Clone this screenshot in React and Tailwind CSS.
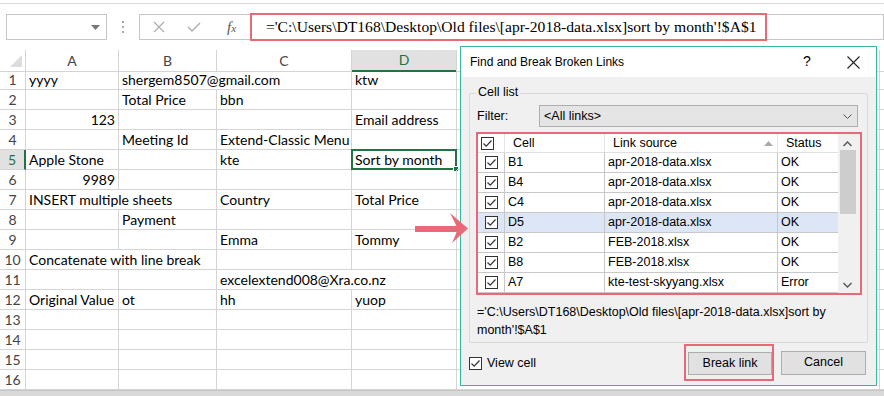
import React from "react";

const PINK = "#e86a78";

const rows = [
  [{ t: "yyyy" }, { t: "shergem8507@gmail.com", span: 2 }, { t: "ktw" }, {}],
  [{}, { t: "Total Price" }, { t: "bbn" }, {}, {}],
  [{ t: "123", right: true }, {}, {}, { t: "Email address" }, {}],
  [{}, { t: "Meeting Id" }, { t: "Extend-Classic Menu" }, {}, {}],
  [{ t: "Apple Stone" }, {}, { t: "kte" }, { t: "Sort by month", sel: true }, {}],
  [{ t: "9989", right: true }, {}, {}, {}, {}],
  [{ t: "INSERT multiple sheets", span: 2 }, { t: "Country" }, { t: "Total Price" }, {}],
  [{}, { t: "Payment" }, {}, {}, {}],
  [{}, {}, { t: "Emma" }, { t: "Tommy" }, {}],
  [{ t: "Concatenate with line break", span: 2 }, {}, {}, {}],
  [{}, {}, { t: "excelextend008@Xra.co.nz", span: 2 }, {}],
  [{ t: "Original Value" }, { t: "ot" }, { t: "hh" }, { t: "yuop" }, {}],
  [{}, {}, {}, {}, {}],
  [{}, {}, {}, {}, {}],
  [{}, {}, {}, {}, {}],
  [{}, {}, {}, {}, {}],
];

const links = [
  ["B1", "apr-2018-data.xlsx", "OK"],
  ["B4", "apr-2018-data.xlsx", "OK"],
  ["C4", "apr-2018-data.xlsx", "OK"],
  ["D5", "apr-2018-data.xlsx", "OK"],
  ["B2", "FEB-2018.xlsx", "OK"],
  ["B8", "FEB-2018.xlsx", "OK"],
  ["A7", "kte-test-skyyang.xlsx", "Error"],
];

function Check() {
  return (
    <svg width="13" height="13" viewBox="0 0 13 13" className="block">
      <rect x="0.5" y="0.5" width="12" height="12" fill="white" stroke="#333" />
      <path d="M2.5 6.5 L5.2 9.2 L10.5 3.5" fill="none" stroke="#333" strokeWidth="1.2" />
    </svg>
  );
}

function Sheet() {
  return (
    <div className="flex flex-col" style={{ fontFamily: "Lato, 'Liberation Sans', sans-serif" }}>
      <div className="grid grid-cols-[26px_93px_98px_135px_105px_423px_1fr] h-[20px] text-[14px] text-[#444]">
        <div className="border-r border-b border-[#d4d4d4] relative">
          <svg width="26" height="20" className="absolute inset-0">
            <path d="M22 5 L22 17 L10 17 Z" fill="#dcdcdc" />
          </svg>
        </div>
        {["A", "B", "C"].map((c) => (
          <div key={c} className="border-r border-b border-[#d4d4d4] flex items-center justify-center leading-none">{c}</div>
        ))}
        <div className="border-r border-[#d4d4d4] border-b-2 border-b-[#217346] bg-[#e1e1e1] flex items-center justify-center leading-none text-[#217346]">D</div>
        <div className="border-r border-b border-[#d4d4d4] flex items-center justify-center">E</div>
        <div className="border-b border-[#d4d4d4]"></div>
      </div>
      {rows.map((r, i) => (
        <div key={i} className="grid grid-cols-[26px_93px_98px_135px_105px_423px_1fr] h-[20px] text-[14px] text-black">
          <div
            className={
              i === 4
                ? "border-b border-[#d4d4d4] border-r-2 border-r-[#217346] bg-[#e1e1e1] flex items-center justify-center text-[#217346] leading-none"
                : "border-r border-b border-[#d4d4d4] flex items-center justify-center text-[#444] leading-none"
            }
          >
            {i + 1}
          </div>
          {r.map((c, j) => (
            <div
              key={j}
              className={
                (c.span ? "col-span-2 " : "") +
                "relative border-r border-b border-[#d4d4d4] flex items-center whitespace-nowrap overflow-visible leading-none px-[3px] " +
                (c.right ? "justify-end" : "")
              }
            >
              {c.t}
              {c.sel && (
                <div className="absolute -left-[1px] -top-[1px] -right-[1px] -bottom-[1px] border-2 border-[#217346]">
                  <div className="absolute -right-[4px] -bottom-[4px] w-[6px] h-[6px] bg-[#217346] border border-white"></div>
                </div>
              )}
            </div>
          ))}
          <div className="border-b border-[#d4d4d4]"></div>
        </div>
      ))}
      <div className="h-[6px] bg-[#d9d9d9] border-t border-[#c6c6c6]"></div>
    </div>
  );
}

function Toolbar() {
  return (
    <div className="h-[50px] pt-[3px] bg-white">
      <div className="border-t border-[#dadada] h-full flex items-start pt-[10px]">
        <div className="ml-[6px] w-[101px] h-[26px] border border-[#c6c6c6] relative bg-white">
          <svg width="9" height="5" className="absolute right-[6px] top-[10px]">
            <path d="M0 0 L9 0 L4.5 5 Z" fill="#777" />
          </svg>
        </div>
        <div className="w-[32px] h-[26px] flex flex-col items-center justify-center gap-[3px]">
          <div className="w-[2px] h-[2px] bg-[#aaa]"></div>
          <div className="w-[2px] h-[2px] bg-[#aaa]"></div>
          <div className="w-[2px] h-[2px] bg-[#aaa]"></div>
        </div>
        <div className="w-[111px] h-[26px] border border-[#c6c6c6] border-r-0 flex items-center bg-white">
          <svg width="12" height="12" className="ml-[13px]">
            <path d="M1 1 L11 11 M11 1 L1 11" stroke="#b0b0b0" strokeWidth="1.3" />
          </svg>
          <svg width="14" height="12" className="ml-[22px]">
            <path d="M1 6 L5 10 L13 2" fill="none" stroke="#b0b0b0" strokeWidth="1.5" />
          </svg>
          <span
            className="ml-[26px] italic text-[15px] text-[#555] leading-none"
            style={{ fontFamily: "'Liberation Serif', serif" }}
          >
            f<span className="text-[11px]">x</span>
          </span>
        </div>
        <div
          className="-mt-[1px] w-[517px] h-[28px] border-2 flex items-center pl-[14px] text-[15.6px] text-black whitespace-nowrap"
          style={{ borderColor: PINK, fontFamily: "'Liberation Serif', serif" }}
        >
          ='C:\Users\DT168\Desktop\Old files\[apr-2018-data.xlsx]sort by month'!$A$1
        </div>
        <div className="flex-1 h-[26px] border border-l-0 border-[#c6c6c6]"></div>
      </div>
    </div>
  );
}

function Dialog() {
  return (
    <div
      className="absolute left-[460px] top-[46px] w-[417px] h-[340px] border border-[#36b6a0] bg-[#f0f0f0] text-[12px] text-black flex flex-col"
      style={{ fontFamily: "'Liberation Sans', Arial, sans-serif" }}
    >
      <div className="h-[30px] bg-white flex items-center pl-[9px] relative shrink-0">
        <span>Find and Break Broken Links</span>
        <span className="absolute left-[342px] top-[7px] text-[14px] leading-none">?</span>
        <svg width="13" height="13" className="absolute left-[386px] top-[9px]">
          <path d="M0.5 0.5 L12.5 12.5 M12.5 0.5 L0.5 12.5" stroke="#222" strokeWidth="1.1" />
        </svg>
      </div>
      <div className="mt-[16px] mx-[8px] h-[250px] border border-[#d9d9d9] rounded-[2px] relative flex flex-col">
        <span className="absolute -top-[8px] left-[6px] px-[2px] bg-[#f0f0f0] leading-none text-[12.5px]">Cell list</span>
        <div className="mt-[11px] flex items-center pl-[7px] pr-[9px] h-[22px]">
          <span className="w-[62px] text-[12.5px]">Filter:</span>
          <div className="flex-1 h-[22px] bg-[#e5e5e5] border border-[#adadad] flex items-center pl-[4px] relative text-[12.5px]">
            &lt;All links&gt;
            <svg width="9" height="6" className="absolute right-[5px] top-[8px]">
              <path d="M0.5 0.5 L4.5 4.5 L8.5 0.5" fill="none" stroke="#555" strokeWidth="1" />
            </svg>
          </div>
        </div>
        <div className="mt-[5px] ml-[6px] mr-[5px] border-2 h-[163px] flex" style={{ borderColor: PINK }}>
          <div className="w-[360px] bg-white flex flex-col">
            <div className="h-[19px] flex text-[12.5px] border-b border-[#e0e0e0]">
              <div className="w-[27px] border-r border-[#e5e5e5] flex items-center pl-[3px]">
                <Check />
              </div>
              <div className="w-[100px] border-r border-[#e5e5e5] flex items-center pl-[8px]">Cell</div>
              <div className="w-[173px] border-r border-[#e5e5e5] flex items-center pl-[8px] relative">
                Link source
                <svg width="9" height="5" className="absolute right-[4px] top-[7px]">
                  <path d="M0 5 L4.5 0 L9 5 Z" fill="#aaa" />
                </svg>
              </div>
              <div className="w-[60px] flex items-center pl-[8px]">Status</div>
            </div>
            {links.map((l, i) => (
              <div
                key={i}
                className={"h-[20px] flex text-[12.5px] border-b border-[#c8c8c8] " + (i === 3 ? "bg-[#dce6f7]" : "")}
              >
                <div className="w-[27px] border-r border-[#c8c8c8] flex items-center pl-[7px]">
                  <Check />
                </div>
                <div className="w-[100px] border-r border-[#c8c8c8] flex items-center pl-[3px]">{l[0]}</div>
                <div className="w-[173px] border-r border-[#c8c8c8] flex items-center pl-[3px]">{l[1]}</div>
                <div className="w-[60px] flex items-center pl-[3px]">{l[2]}</div>
              </div>
            ))}
          </div>
          <div className="flex-1 bg-[#f0f0f0] relative">
            <svg width="9" height="6" className="absolute left-[5px] top-[7px]">
              <path d="M0.5 5 L4.5 1 L8.5 5" fill="none" stroke="#555" strokeWidth="1.4" />
            </svg>
            <div className="absolute left-[2px] right-[4px] top-[16px] h-[64px] bg-[#cdcdcd]"></div>
            <svg width="9" height="6" className="absolute left-[5px] bottom-[5px]">
              <path d="M0.5 1 L4.5 5 L8.5 1" fill="none" stroke="#555" strokeWidth="1.4" />
            </svg>
          </div>
        </div>
        <div className="mt-[8px] pl-[7px] pr-[20px] leading-[18px] text-[12.5px]">
          ='C:\Users\DT168\Desktop\Old files\[apr-2018-data.xlsx]sort by month'!$A$1
        </div>
      </div>
      <div className="flex items-center mt-[8px] pl-[8px] relative h-[24px]">
        <Check />
        <span className="ml-[5px] text-[12.5px]">View cell</span>
        <div className="ml-auto flex gap-[9px] mr-[10px]">
          <div className="relative">
            <div className="w-[84px] h-[23px] bg-[#e1e1e1] border border-[#adadad] flex items-center justify-center text-[12.5px]">Break link</div>
            <div className="absolute -left-[4px] -top-[8px] w-[90px] h-[37px] border-2" style={{ borderColor: PINK }}></div>
          </div>
          <div className="w-[85px] h-[24px] -mt-[1px] bg-[#e1e1e1] border border-[#adadad] flex items-center justify-center text-[12.5px]">Cancel</div>
        </div>
      </div>
    </div>
  );
}

export default function App() {
  return (
    <div className="w-[884px] h-[396px] relative overflow-hidden bg-white">
      <Toolbar />
      <Sheet />
      <Dialog />
      <svg width="60" height="34" className="absolute left-[412px] top-[212px]">
        <path d="M3 14 L46 14 L46 20 L3 20 Z" fill={PINK} />
        <path d="M38 1 L56 16.5 L40 31 L46 17 Z" fill={PINK} />
      </svg>
    </div>
  );
}
